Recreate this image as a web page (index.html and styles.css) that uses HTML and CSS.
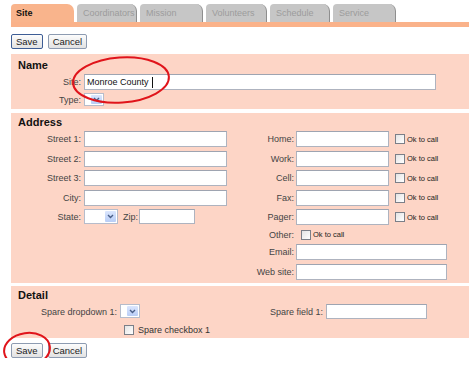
FILE: index.html
```html
<!DOCTYPE html>
<html lang="en">

<head>
    <meta charset="UTF-8">
    <meta name="viewport" content="width=device-width, initial-scale=1.0">
    <title>Site</title>
    <link rel="stylesheet" href="styles.css">
</head>

<body>
    <div class="page">
        <div class="tabs">
            <div class="tab active tab-site">Site</div>
            <div class="tab tab-coord">Coordinators</div>
            <div class="tab tab-mission">Mission</div>
            <div class="tab tab-vol">Volunteers</div>
            <div class="tab tab-sched">Schedule</div>
            <div class="tab tab-service">Service</div>
        </div>

        <div class="buttons">
            <button class="btn focused">Save</button>
            <button class="btn">Cancel</button>
        </div>

        <div class="panel name-panel">
            <h3>Name</h3>
            <div class="grid name-grid">
                <label>Site:</label>
                <div class="input site-input">Monroe County<span class="caret"></span></div>
                <label>Type:</label>
                <div class="select select-type">
                    <span class="arrow"><svg width="7" height="5" viewBox="0 0 7 5"><path d="M1 1 L3.5 3.5 L6 1" fill="none" stroke="#4a5f88" stroke-width="1.4"/></svg></span>
                </div>
            </div>
        </div>

        <div class="panel address-panel">
            <h3>Address</h3>
            <div class="address-body">
                <div class="grid address-left">
                    <label>Street 1:</label>
                    <input type="text" class="input">
                    <label>Street 2:</label>
                    <input type="text" class="input">
                    <label>Street 3:</label>
                    <input type="text" class="input">
                    <label>City:</label>
                    <input type="text" class="input">
                    <label>State:</label>
                    <div class="state-row">
                        <div class="select select-state">
                            <span class="arrow"><svg width="7" height="5" viewBox="0 0 7 5"><path d="M1 1 L3.5 3.5 L6 1" fill="none" stroke="#4a5f88" stroke-width="1.4"/></svg></span>
                        </div>
                        <label class="zip-label">Zip:</label>
                        <input type="text" class="input zip-input">
                    </div>
                </div>

                <div class="grid address-right">
                    <label>Home:</label>
                    <div class="phone"><input type="text" class="input phone-input"><input type="checkbox" class="check"><span class="ok">Ok to call</span></div>
                    <label>Work:</label>
                    <div class="phone"><input type="text" class="input phone-input"><input type="checkbox" class="check"><span class="ok">Ok to call</span></div>
                    <label>Cell:</label>
                    <div class="phone"><input type="text" class="input phone-input"><input type="checkbox" class="check"><span class="ok">Ok to call</span></div>
                    <label>Fax:</label>
                    <div class="phone"><input type="text" class="input phone-input"><input type="checkbox" class="check"><span class="ok">Ok to call</span></div>
                    <label>Pager:</label>
                    <div class="phone"><input type="text" class="input phone-input"><input type="checkbox" class="check"><span class="ok">Ok to call</span></div>
                    <label class="other-label">Other:</label>
                    <div class="phone other"><input type="checkbox" class="check"><span class="ok">Ok to call</span></div>
                    <label>Email:</label>
                    <input type="text" class="input long-input">
                    <label>Web site:</label>
                    <input type="text" class="input long-input">
                </div>
            </div>
        </div>

        <div class="panel detail-panel">
            <h3>Detail</h3>
            <div class="grid detail-grid">
                <label>Spare dropdown 1:</label>
                <div class="select select-spare">
                    <span class="arrow"><svg width="7" height="5" viewBox="0 0 7 5"><path d="M1 1 L3.5 3.5 L6 1" fill="none" stroke="#4a5f88" stroke-width="1.4"/></svg></span>
                </div>
                <label>Spare field 1:</label>
                <input type="text" class="input spare-input">
                <div class="spare-check"><input type="checkbox" class="check big"><span>Spare checkbox 1</span></div>
            </div>
        </div>

        <div class="buttons bottom">
            <button class="btn">Save</button>
            <button class="btn">Cancel</button>
        </div>

        <!-- red marks drawn over the screenshot -->
        <svg class="marks" width="474" height="375" viewBox="0 0 474 375">
            <ellipse cx="121" cy="80" rx="48" ry="22.5" transform="rotate(-4 121 80)" fill="none" stroke="#e0141b" stroke-width="2"/>
            <ellipse cx="27" cy="349.5" rx="23" ry="16.5" transform="rotate(-8 27 349.5)" fill="none" stroke="#e0141b" stroke-width="2"/>
        </svg>
    </div>
</body>

</html>
```

FILE: styles.css
```css
body {
    font-family: "Liberation Sans", Arial, sans-serif;
    font-size: 9px;
    color: #3a3a3a;
    background-color: white;
    margin: 0;
    padding: 0;
}

.page {
    position: relative;
    width: 458px;
    padding: 4px 0 0 11px;
}

/* tabs */

.tabs {
    display: flex;
    gap: 3px;
    height: 18px;
    border-bottom: 5px solid #fab28a;
}

.tab {
    box-sizing: border-box;
    height: 18px;
    padding: 4px 0 0 6px;
    background-color: #c6c6c6;
    color: #9c9c9c;
    border-radius: 4px 7px 0 0;
    border-right: 1px solid #8e8e8e;
}

.tab.active {
    background-color: #f9b48c;
    color: #111;
    font-weight: bold;
    padding-left: 5px;
    border-right: none;
}

.tab-site { width: 63px; }
.tab-coord { width: 60px; }
.tab-mission { width: 63px; }
.tab-vol { width: 61px; }
.tab-sched { width: 60px; }
.tab-service { width: 63px; }

/* buttons */

.buttons {
    display: flex;
    gap: 5px;
    margin-top: 7px;
}

.buttons.bottom {
    margin-top: 5px;
}

.btn {
    box-sizing: border-box;
    height: 15px;
    padding: 0 4px;
    font-family: "Liberation Sans", Arial, sans-serif;
    font-size: 9.5px;
    color: #222;
    background: linear-gradient(#fcfcfc, #e2e2e2);
    border: 1px solid #8d9bb1;
    border-radius: 2px;
    line-height: 12px;
}

.btn.focused {
    border-color: #3d5d95;
}

/* panels */

.panel {
    box-sizing: border-box;
    background-color: #fdd5c6;
    padding: 2px 7px 3px 7px;
    margin-top: 4px;
}

.name-panel {
    margin-top: 5px;
    height: 55px;
}

.address-panel {
    height: 170px;
}

.detail-panel {
    margin-top: 3px;
    height: 52px;
}

.panel h3 {
    margin: 0;
    font-size: 11px;
    line-height: 15px;
    color: #111;
}

.name-panel h3 {
    line-height: 16px;
    margin-top: 1px;
}

.grid {
    display: grid;
    align-content: start;
    margin-top: 1px;
}

.grid label {
    text-align: right;
    align-self: center;
    color: #444;
}

.input {
    box-sizing: border-box;
    height: 16px;
    margin: 0;
    padding: 0 2px;
    background-color: white;
    border: 1px solid #aeb3bf;
    border-top-color: #9ea4b1;
    font-family: "Liberation Sans", Arial, sans-serif;
    font-size: 9px;
}

.select {
    box-sizing: border-box;
    display: flex;
    justify-content: flex-end;
    height: 14px;
    padding: 1px;
    background-color: white;
    border: 1px solid #b6bccb;
}

.arrow {
    display: flex;
    align-items: center;
    justify-content: center;
    width: 11px;
    background: linear-gradient(#dbe6fd, #b8cdf6);
    border-radius: 1px;
}

.check {
    appearance: none;
    -webkit-appearance: none;
    box-sizing: border-box;
    width: 10px;
    height: 10px;
    margin: 0;
    background: linear-gradient(135deg, #e4e4e4, #fff);
    border: 1px solid #7b7f88;
}

/* name */

.name-grid {
    grid-template-columns: 63px 352px;
    column-gap: 3px;
    row-gap: 3px;
}

.site-input {
    display: flex;
    align-items: center;
    color: #111;
}

.caret {
    display: inline-block;
    width: 1px;
    height: 11px;
    margin-left: 3px;
    background-color: #111;
}

.select-type {
    width: 20px;
    height: 13px;
}

/* address */

.address-body {
    display: flex;
    margin-top: 1px;
}

.address-left {
    grid-template-columns: 63px 143px;
    column-gap: 3px;
    row-gap: 3.5px;
    margin-top: 0;
}

.state-row {
    display: flex;
    align-items: center;
}

.select-state {
    width: 34px;
    height: 15px;
}

.grid .zip-label {
    margin: 0 1px 0 5px;
}

.zip-input {
    width: 56px;
    height: 15px;
}

.address-right {
    grid-template-columns: 40px 151px;
    column-gap: 2px;
    row-gap: 3.5px;
    margin: 0 0 0 27px;
}

.phone {
    display: flex;
    align-items: center;
}

.phone-input {
    width: 93px;
}

.phone .check {
    margin-left: 6px;
}

.ok {
    margin-left: 2px;
    font-size: 7.5px;
    color: #222;
}

.phone.other {
    height: 12px;
}

.phone.other .check {
    margin-left: 5px;
}

.long-input {
    width: 151px;
}

/* detail */

.detail-grid {
    grid-template-columns: 99px 128px 72px 101px;
    column-gap: 3px;
    row-gap: 6px;
}

.select-spare {
    width: 20px;
}

.spare-input {
    width: 101px;
    height: 15px;
}

.spare-check {
    grid-column: 2 / 5;
    display: flex;
    align-items: center;
    gap: 4px;
    padding-left: 4px;
    color: #333;
}

/* overlay marks */

.marks {
    position: absolute;
    top: 0;
    left: 0;
    pointer-events: none;
}
```
